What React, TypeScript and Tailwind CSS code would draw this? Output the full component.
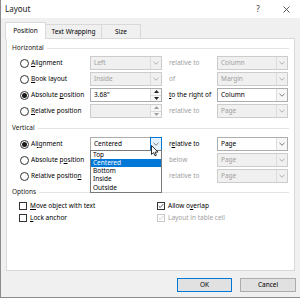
import React from "react";

function Chevron({ color = "#7a7a7a" }: { color?: string }) {
  return (
    <svg width="6" height="4" viewBox="0 0 6 4">
      <path d="M0.5 0.8 L3 3.2 L5.5 0.8" fill="none" stroke={color} strokeWidth="0.9" />
    </svg>
  );
}

function Select({
  w,
  text,
  disabled,
  hover,
}: {
  w: string;
  text: string;
  disabled?: boolean;
  hover?: boolean;
}) {
  return (
    <div
      className={`${w} h-[14px] flex border ${
        disabled ? "border-[#cccccc] bg-[#f0f0f0] text-[#a0a0a0]" : "border-[#adadad] bg-white text-black"
      }`}
    >
      <div className="flex-1 flex items-center pl-[3px] overflow-hidden whitespace-nowrap">{text}</div>
      <div
        className={`w-[11px] flex items-center justify-center ${
          hover
            ? "border border-[#0078d7] bg-[#e5f1fb] -my-px -mr-px w-[12px]"
            : disabled
            ? "border-l border-[#dcdcdc] bg-[#f0f0f0]"
            : "border-l border-[#dcdcdc] bg-[#f7f7f7]"
        }`}
      >
        <Chevron color={disabled ? "#a8a8a8" : "#707070"} />
      </div>
    </div>
  );
}

function Spin({ text, disabled }: { text: string; disabled?: boolean }) {
  const c = disabled ? "#a0a0a0" : "#222";
  return (
    <div
      className={`w-[72px] h-[14px] flex border ${
        disabled ? "border-[#cccccc] bg-[#f0f0f0] text-[#a0a0a0]" : "border-[#adadad] bg-white text-black"
      }`}
    >
      <div className="flex-1 flex items-center pl-[3px]">{text}</div>
      <div className="w-[11px] flex flex-col border-l border-[#dcdcdc] bg-[#f7f7f7]">
        <div className="flex-1 flex items-center justify-center border-b border-[#dcdcdc]">
          <svg width="5" height="3" viewBox="0 0 5 3">
            <path d="M0 3 L2.5 0 L5 3 Z" fill={c} />
          </svg>
        </div>
        <div className="flex-1 flex items-center justify-center">
          <svg width="5" height="3" viewBox="0 0 5 3">
            <path d="M0 0 L2.5 3 L5 0 Z" fill={c} />
          </svg>
        </div>
      </div>
    </div>
  );
}

function Radio({ checked }: { checked?: boolean }) {
  return (
    <div className="w-[9px] h-[9px] rounded-full border border-[#333333] bg-white flex items-center justify-center shrink-0">
      {checked && <div className="w-[5px] h-[5px] rounded-full bg-[#1a1a1a]" />}
    </div>
  );
}

function Check({ checked, disabled }: { checked?: boolean; disabled?: boolean }) {
  return (
    <div
      className={`w-[8px] h-[8px] border flex items-center justify-center shrink-0 ${
        disabled ? "border-[#c8c8c8]" : "border-[#333333]"
      } bg-white`}
    >
      {checked && (
        <svg width="7" height="6" viewBox="0 0 7 6">
          <path
            d="M0.8 3 L2.6 4.8 L6.2 0.8"
            fill="none"
            stroke={disabled ? "#c0c0c0" : "#222"}
            strokeWidth="0.9"
          />
        </svg>
      )}
    </div>
  );
}

function U({ children }: { children: React.ReactNode }) {
  return <span className="underline underline-offset-[1px]">{children}</span>;
}

function GroupLabel({ text }: { text: string }) {
  return (
    <div className="h-[10px] flex items-center text-[#1a1a1a]">
      <span className="whitespace-nowrap">{text}</span>
      <div className="flex-1 h-px bg-[#e3e3e3] ml-[3px]" />
    </div>
  );
}

function Row({
  checked,
  label,
  sel,
  mid,
  midDisabled,
  right,
  rightDisabled,
}: {
  checked?: boolean;
  label: React.ReactNode;
  sel: React.ReactNode;
  mid: React.ReactNode;
  midDisabled?: boolean;
  right: string;
  rightDisabled?: boolean;
}) {
  return (
    <div className="h-[16px] flex items-center pl-[8px]">
      <div className="w-[70px] flex items-center">
        <Radio checked={checked} />
        <span className="ml-[2px] whitespace-nowrap">{label}</span>
      </div>
      {sel}
      <div className={`w-[55px] pl-[7px] whitespace-nowrap ${midDisabled ? "text-[#a0a0a0]" : "text-black"}`}>
        {mid}
      </div>
      <Select w="w-[71px]" text={right} disabled={rightDisabled} />
    </div>
  );
}

export default function App() {
  return (
    <div
      className="w-[300px] h-[298px] bg-[#f0f0f0] border-l border-b border-[#8c8c8c] flex flex-col relative overflow-hidden text-[6.5px] text-black"
      style={{ fontFamily: '"Noto Sans", "Open Sans", sans-serif' }}
    >
      {/* Title bar */}
      <div className="h-[18px] bg-white flex items-center pl-[4px] shrink-0">
        <span className="text-[8px] text-[#1a1a1a]">Layout</span>
        <div className="flex-1" />
        <div className="w-[28px] flex justify-center text-[8px] text-[#333]">?</div>
        <div className="w-[28px] flex justify-center">
          <svg width="7" height="7" viewBox="0 0 7 7">
            <path d="M0.5 0.5 L6.5 6.5 M6.5 0.5 L0.5 6.5" stroke="#333" strokeWidth="0.8" />
          </svg>
        </div>
      </div>

      {/* Tabs */}
      <div className="h-[20px] flex items-end pl-[4px] shrink-0 relative z-10">
        <div className="w-[41px] h-[17px] -mb-px bg-white border border-b-0 border-[#d9d9d9] flex items-center justify-center text-[6.5px]">
          Position
        </div>
        <div className="w-[56px] h-[14px] border-t border-r border-[#d9d9d9] flex items-center justify-center">
          Text Wrapping
        </div>
        <div className="w-[39px] h-[14px] border-t border-r border-[#d9d9d9] flex items-center justify-center">
          Size
        </div>
      </div>

      {/* Panel */}
      <div className="ml-[5px] w-[289px] h-[233px] bg-white border border-[#d9d9d9] pl-[5px] pr-[5px] pt-[4px] shrink-0">
        <GroupLabel text="Horizontal" />
        <div className="mt-[2px]">
          <Row
            label={<><U>A</U>lignment</>}
            sel={<Select w="w-[72px]" text="Left" disabled />}
            mid="relative to"
            midDisabled
            right="Column"
            rightDisabled
          />
          <Row
            label={<><U>B</U>ook layout</>}
            sel={<Select w="w-[72px]" text="Inside" disabled />}
            mid="of"
            midDisabled
            right="Margin"
            rightDisabled
          />
          <Row
            checked
            label={<>Absolute <U>p</U>osition</>}
            sel={<Spin text={'3.68"'} />}
            mid={<><U>t</U>o the right of</>}
            right="Column"
          />
          <Row
            label={<><U>R</U>elative position</>}
            sel={<Spin text="" disabled />}
            mid="relative to"
            midDisabled
            right="Page"
            rightDisabled
          />
        </div>

        <div className="mt-[4px]">
          <GroupLabel text="Vertical" />
        </div>
        <div className="mt-[3px]">
          <Row
            checked
            label={<>Al<U>i</U>gnment</>}
            sel={<Select w="w-[72px]" text="Centered" hover />}
            mid={<>r<U>e</U>lative to</>}
            right="Page"
          />
          <Row
            label={<>Absolute p<U>o</U>sition</>}
            sel={<Spin text="" disabled />}
            mid="below"
            midDisabled
            right="Page"
            rightDisabled
          />
          <Row
            label={<>Relative positio<U>n</U></>}
            sel={<Spin text="" disabled />}
            mid="relative to"
            midDisabled
            right="Page"
            rightDisabled
          />
        </div>

        <div className="mt-[3px]">
          <GroupLabel text="Options" />
        </div>
        <div className="mt-[3px] flex pl-[7px]">
          <div className="w-[138px] flex flex-col">
            <div className="h-[12px] flex items-center">
              <Check />
              <span className="ml-[3px]">
                <U>M</U>ove object with text
              </span>
            </div>
            <div className="h-[12px] flex items-center">
              <Check />
              <span className="ml-[3px]">
                <U>L</U>ock anchor
              </span>
            </div>
          </div>
          <div className="flex flex-col">
            <div className="h-[12px] flex items-center">
              <Check checked />
              <span className="ml-[3px]">
                Allow o<U>v</U>erlap
              </span>
            </div>
            <div className="h-[12px] flex items-center text-[#a0a0a0]">
              <Check checked disabled />
              <span className="ml-[3px]">Layout in table cell</span>
            </div>
          </div>
        </div>
      </div>

      {/* Buttons */}
      <div className="mt-[7px] flex justify-end gap-[8px] pr-[4px]">
        <div className="w-[55px] h-[14px] border border-[#0078d7] bg-[#e1e1e1] flex items-center justify-center">
          OK
        </div>
        <div className="w-[56px] h-[14px] border border-[#adadad] bg-[#e1e1e1] flex items-center justify-center">
          Cancel
        </div>
      </div>

      {/* Dropdown list overlay */}
      <div className="absolute left-[89px] top-[150px] w-[72px] h-[43px] bg-white border border-[#7a7a7a] z-20 flex flex-col">
        {["Top", "Centered", "Bottom", "Inside", "Outside"].map((t) => (
          <div
            key={t}
            className={`h-[8.2px] flex items-center pl-[2px] leading-none ${
              t === "Centered" ? "bg-[#0078d7] text-white" : "text-black"
            }`}
          >
            {t}
          </div>
        ))}
      </div>

      {/* Cursor */}
      <svg className="absolute left-[150px] top-[145px] z-30" width="8" height="12" viewBox="0 0 8 12">
        <path d="M0.5 0.5 L0.5 9.5 L2.6 7.6 L4 10.8 L5.4 10.2 L4.1 7.1 L7 7.1 Z" fill="white" stroke="black" strokeWidth="0.8" />
      </svg>
    </div>
  );
}
